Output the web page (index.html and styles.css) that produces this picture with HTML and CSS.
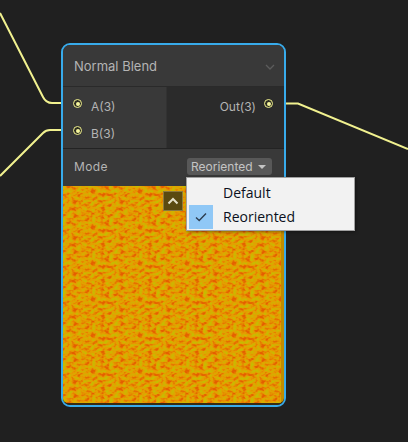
FILE: index.html
```html
<!DOCTYPE html>
<html lang="en">
<head>
<meta charset="utf-8">
<title>Normal Blend</title>
<link rel="stylesheet" href="styles.css">
</head>
<body>
<div class="canvas">
  <svg class="wires" width="408" height="442" viewBox="0 0 408 442">
    <g fill="none" stroke="#f1f18f" stroke-width="2">
      <path d="M0 13 L43 97 Q46 103 52 103 L62 103"/>
      <path d="M0 176 L43 133 Q46 130 50 130 L62 130"/>
      <path d="M284 103.500 L298 103.500 L408 149"/>
    </g>
    <g fill="none" stroke="#6c6c50" stroke-width="2">
      <path d="M62 103 L73 103"/>
      <path d="M62 130 L73 130"/>
      <path d="M273 103.500 L284 103.500"/>
    </g>
  </svg>

  <section class="node">
    <header class="title">
      <span>Normal Blend</span>
      <svg class="chevron" width="10" height="6" viewBox="0 0 10 6"><path d="M1 1 L5 5 L9 1" fill="none" stroke="#5c5c5c" stroke-width="1.300"/></svg>
    </header>
    <div class="ports">
      <div class="col inputs">
        <div class="port"><i class="dot"></i><span>A(3)</span></div>
        <div class="port"><i class="dot"></i><span>B(3)</span></div>
      </div>
      <div class="col outputs">
        <div class="port"><span>Out(3)</span><i class="dot"></i></div>
      </div>
    </div>
    <div class="control">
      <span class="label">Mode</span>
      <button class="select">Reoriented<i class="caret"></i></button>
    </div>
    <div class="preview">
      <svg class="texture" width="218" height="218">
        <filter id="tex" x="0" y="0" width="100%" height="100%" color-interpolation-filters="sRGB">
          <feTurbulence type="fractalNoise" baseFrequency="0.21 0.27" numOctaves="2" seed="11" stitchTiles="stitch"/>
          <feColorMatrix type="matrix" values="1 0 0 0 0  1 0 0 0 0  0 0 0 0 0  0 0 0 0 1"/>
          <feComponentTransfer>
            <feFuncR type="table" tableValues="0.9 0.9 0.9 0.78 0.78"/>
            <feFuncG type="table" tableValues="0.35 0.38 0.62 0.74 0.74"/>
          </feComponentTransfer>
        </filter>
        <pattern id="tile" width="47" height="36" patternUnits="userSpaceOnUse">
          <rect width="47" height="36" filter="url(#tex)"/>
        </pattern>
        <rect width="218" height="218" fill="url(#tile)"/>
      </svg>
      <button class="collapse">
        <svg width="12" height="8" viewBox="0 0 12 8"><path d="M1.500 6.500 L6 2 L10.500 6.500" fill="none" stroke="#e4e0c8" stroke-width="2"/></svg>
      </button>
    </div>
  </section>

  <ul class="menu">
    <li class="item"><span class="tick"></span><span class="text">Default</span></li>
    <li class="item"><span class="tick on"><svg width="12" height="10" viewBox="0 0 12 10"><path d="M1 5.500 L4.200 8.500 L11 1.500" fill="none" stroke="#2d3e50" stroke-width="1.400"/></svg></span><span class="text">Reoriented</span></li>
  </ul>
</div>
</body>
</html>
```

FILE: styles.css
```css
* { box-sizing: border-box; }
html, body { margin: 0; padding: 0; }
body { background: #202020; font-family: Inter, "Liberation Sans", Arial, sans-serif; overflow: hidden; }
.canvas { position: relative; width: 408px; height: 442px; overflow: hidden; }
.wires { position: absolute; left: 0; top: 0; display: block; }

.node {
  position: absolute; left: 61px; top: 43px; width: 225px; height: 364px;
  border: 2px solid #38abeb; border-radius: 9px; background: #2b2b2b;
  display: flex; flex-direction: column; overflow: hidden;
}
.title {
  height: 41px; flex: none; background: #393939; color: #b4b4b4;
  font-size: 13px;
  display: flex; align-items: center; justify-content: space-between;
  padding: 0 9px 0 11px;
}
.chevron { display: block; margin-top: 2px; }
.ports { display: flex; height: 63px; flex: none; border-top: 1px solid #2a2a2a; border-bottom: 1px solid #232323; }
.col { padding-top: 8px; display: flex; flex-direction: column; gap: 7px; }
.inputs { width: 104px; background: #393939; border-right: 1px solid #323232; padding-left: 10px; }
.outputs { flex: 1; background: #2b2b2b; padding-right: 11px; align-items: flex-end; }
.port { height: 20px; display: flex; align-items: center; color: #b4b4b4; font-size: 12px; }
.inputs .port span { margin-left: 9px; margin-top: 3px; }
.outputs .port span { margin-right: 8px; margin-top: 3px; }
.dot {
  width: 9px; height: 9px; border-radius: 50%; flex: none; margin-top: -3px;
  border: 1px solid #f1f18f; background: #2d2d22; position: relative;
}
.dot::after {
  content: ""; position: absolute; left: 1.500px; top: 1.500px; width: 4px; height: 4px;
  border-radius: 50%; background: #f6f69c;
}
.control {
  height: 37px; flex: none; background: #393939;
  display: flex; align-items: center; justify-content: space-between;
  padding: 0 11px 2px;
}
.label { color: #b4b4b4; font-size: 12px; letter-spacing: .4px; }
.select {
  width: 85px; height: 17px; margin: 0 1px 0 0; padding: 0 0 0 4px; border: 0; border-radius: 3px;
  background: #585858; color: #c4c4c4; font: 12px Inter, "Liberation Sans", Arial, sans-serif;
  display: flex; align-items: center; gap: 5px;
}
.caret { width: 0; height: 0; border: 4px solid transparent; border-top: 4px solid #c4c4c4; border-bottom: 0; }
.preview { position: relative; flex: 1; background: #c08c00; border-radius: 0 0 6px 6px; overflow: hidden; border-bottom: 2px solid #3a2a10; }
.texture { display: block; }
.collapse {
  position: absolute; left: 100px; top: 5px; width: 20px; height: 20px; padding: 0;
  border: 1px solid #8a7a40; background: #5a4a10; display: flex; align-items: center; justify-content: center;
}
.collapse svg { display: block; }

.menu {
  position: absolute; left: 186px; top: 177px; width: 169px; height: 54px; margin: 0; padding: 3px 2px;
  list-style: none; background: #f2f2f2; border: 1px solid #a0a0a0;
  box-shadow: 1px 1px 3px rgba(0,0,0,.4);
  color: #0b1020; font: 14px "Open Sans", "Liberation Sans", sans-serif;
}
.item { height: 24px; display: flex; align-items: center; }
.text { margin-top: -2px; }
.tick { width: 24px; height: 24px; margin-right: 10px; flex: none; display: flex; align-items: center; justify-content: center; }
.tick.on { background: #90c8f6; }
.tick svg { display: block; }
```
